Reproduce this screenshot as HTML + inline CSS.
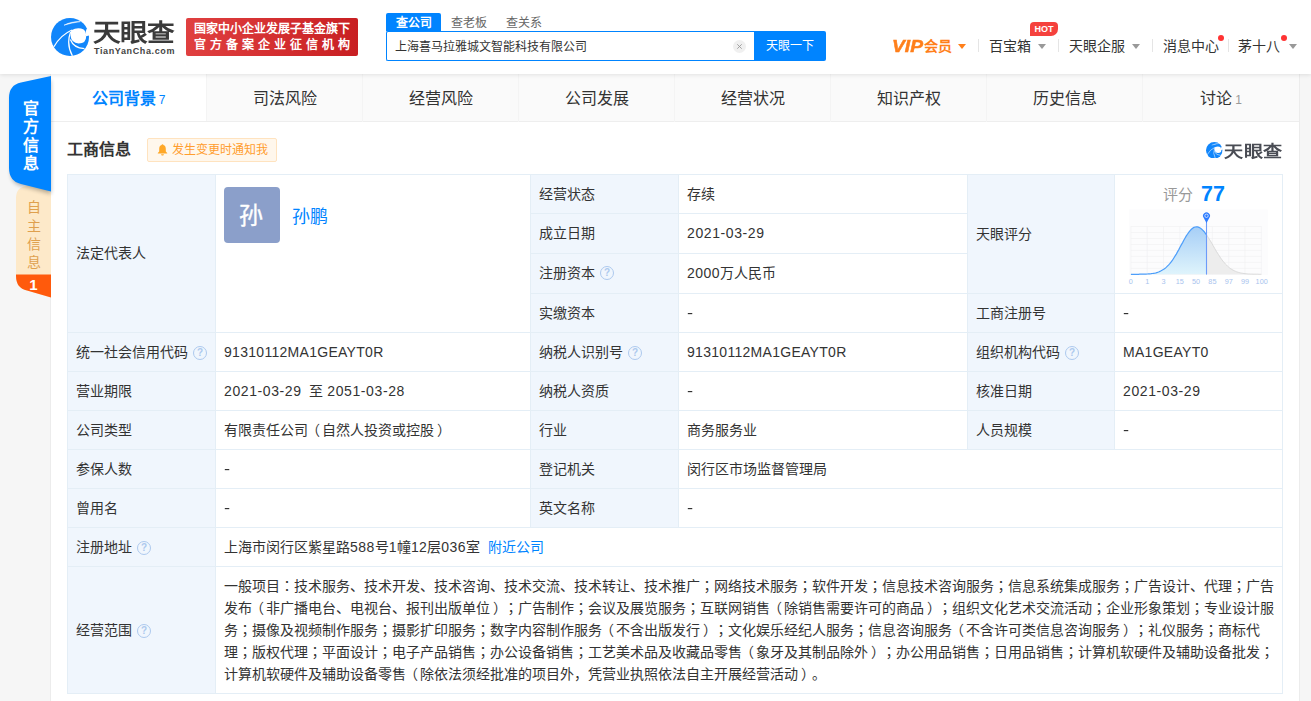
<!DOCTYPE html>
<html lang="zh-CN">
<head>
<meta charset="utf-8">
<title>天眼查</title>
<style>
*{box-sizing:border-box;margin:0;padding:0}
html,body{width:1311px;height:701px;overflow:hidden;background:#f6f6f6}
body{text-spacing-trim:space-all;font-family:"Liberation Sans",sans-serif;font-size:14px;color:#333;position:relative}
.abs{position:absolute}
/* header */
#hdr{position:absolute;left:0;top:0;width:1311px;height:74px;background:#fff;box-shadow:0 1px 4px rgba(0,0,0,.10);z-index:5}
#logo-ico{position:absolute;left:51px;top:18px;width:38px;height:38px}
#logo-txt{position:absolute;left:93px;top:16.5px;font-size:23.5px;font-weight:bold;color:#3a3a3a;line-height:32px;white-space:nowrap;transform:scaleX(1.175);transform-origin:0 0}
#logo-sub{position:absolute;left:94px;top:45px;font-size:9px;font-weight:bold;color:#444;line-height:12px;letter-spacing:.62px;white-space:nowrap}
#banner{position:absolute;left:186px;top:18px;width:172px;height:38px;border-radius:2px;background:linear-gradient(90deg,#e04040,#c81f22);color:#fff;font-weight:bold;font-size:12px;line-height:15px;padding:4px 0 0 8px;white-space:nowrap}
#banner .l2{letter-spacing:4px;display:block;margin-top:1px}
#stabs{position:absolute;left:386px;top:13px;height:18px;font-size:12px;line-height:21px;color:#666;white-space:nowrap}
#stabs span{display:inline-block;height:18px;padding:0 9.5px;vertical-align:top}
#stabs .on{background:#0084ff;color:#fff;font-weight:bold;border-radius:2px 2px 0 0}
#sbox{position:absolute;left:386px;top:31px;width:369px;height:30px;border:1px solid #0084ff;border-right:0;border-radius:2px 0 0 2px;font-size:12px;line-height:29px;padding-left:8px;padding-top:1px;color:#333;white-space:nowrap}
#sclr{position:absolute;left:732.5px;top:39.5px;width:13px;height:13px;border-radius:50%;background:#f0f0f0}
#sbtn{position:absolute;left:754px;top:31px;width:72px;height:30px;background:#0084ff;color:#fff;font-size:12px;line-height:30px;text-align:center;border-radius:0 2px 2px 0}
.rn{position:absolute;top:36px;font-size:14px;line-height:20px;color:#333;white-space:nowrap}
.caret{position:absolute;width:0;height:0;border-left:4.5px solid transparent;border-right:4.5px solid transparent;border-top:5px solid #999}
.vsep{position:absolute;top:39px;width:1px;height:13px;background:#e5e5e5}
.dot{position:absolute;width:6px;height:6px;border-radius:50%;background:#f33}
/* side tabs */
/* main */
#main{position:absolute;left:51px;top:74px;width:1248px;height:627px;background:#fff;box-shadow:-1px 0 0 #ececec,1px 0 0 #ececec}
#nav{position:absolute;left:0;top:0;width:1248px;height:48px;background:#fafafa;border-bottom:1px solid #eee}
#nav div{position:absolute;top:0;height:48px;line-height:50px;font-size:16px;color:#333;text-align:center;width:156px;border-right:1px solid #f4f4f4}
#nav div.on{background:#fff;color:#0084ff;font-weight:bold;height:47px}
#nav small{font-size:12px;font-weight:normal;margin-left:3px}
#h2{position:absolute;left:16px;top:64px;font-size:16px;font-weight:bold;color:#333;line-height:24px}
#notify{position:absolute;left:96px;top:64px;width:130px;height:24px;border:1px solid #ffe3bf;background:#fff7ec;border-radius:2px;color:#ff9d2e;font-size:12px;line-height:23px;padding-left:24px;white-space:nowrap}
table{position:absolute;left:16px;top:100px;border-collapse:collapse;table-layout:fixed;width:1216px}
td{border:1px solid #e4eef6;font-size:14px;line-height:22px;padding:0 8px;height:39px;color:#333;vertical-align:middle;white-space:nowrap}
td.k{background:#f0f6fd}
.q{display:inline-block;width:14px;height:14px;border:1px solid #adc9ee;border-radius:50%;color:#adc9ee;font-size:10px;font-style:normal;font-weight:bold;line-height:12px;text-align:center;vertical-align:1.5px;margin-left:5px}
b.pc,b.pl,b.pr{font-weight:normal}
b.pl{position:relative;left:-2.5px}
b.pr{position:relative;left:2.5px}
.hy{display:inline-block;font-style:normal;transform:scaleX(1.3);transform-origin:0 50%}
.n{letter-spacing:.29px}
.g{letter-spacing:.43px}
.d{letter-spacing:.6px}
tr.up td{padding-bottom:2px}
a{color:#0084ff;text-decoration:none}
#hot{position:absolute;left:1030px;top:22px;width:28px;height:14px;background:#f5413d;color:#fff;font-size:9px;font-weight:bold;line-height:14px;text-align:center;border-radius:4px 4px 7px 0}
#wm{left:1173px;top:66px;font-size:15.5px;line-height:24px;font-weight:bold;color:#494c54;white-space:nowrap;transform:scaleX(1.23);transform-origin:0 0}
#score{padding:0 8px}
#av{display:inline-block;width:56px;height:56px;border-radius:4px;background:#8b9fca;color:#fff;font-size:24px;font-weight:normal;-webkit-text-stroke:.35px #fff;line-height:58px;text-align:center;vertical-align:top;padding-right:1.5px}
#nm{display:inline-block;font-size:18px;line-height:24px;margin-left:11.5px;margin-top:17.6px;vertical-align:top;letter-spacing:.4px}

</style>
</head>
<body>
<svg width="0" height="0" style="position:absolute"><defs>
<symbol id="tyc" viewBox="0 0 38 38">
  <circle cx="19" cy="19" r="19" fill="#1186fb"/>
  <path d="M20.3 12.3 Q27 8.6 32.6 11.6 Q35 13.4 34 16.2 L35.2 18 Q35.4 25.4 27.6 25.4 Q20.3 25 19.6 18 Q19.5 14.5 20.3 12.3 Z" fill="#fff"/>
  <path d="M35.6 11 L33.9 16.3 L34.9 18.3 L38.5 17.5 L39 10.5 Z" fill="#fff"/>
  <path d="M2.9 28.8 Q9.5 17 21 12" stroke="#fff" stroke-width="1.25" fill="none"/>
  <path d="M19.6 14 Q15 26 21.4 37.8" stroke="#fff" stroke-width="1.25" fill="none"/>
  <path d="M19.4 21.5 Q22.5 30 33.4 30.6" stroke="#fff" stroke-width="1.25" fill="none"/>
  <path d="M13 7.2 Q20 3.4 29.3 3.6 Q21 4.8 13 7.2 Z" stroke="#fff" stroke-width=".5" fill="#fff"/>
</symbol></defs></svg>
<div id="hdr">
  <svg id="logo-ico"><use href="#tyc"/></svg>
  <div id="logo-txt">天眼查</div>
  <div id="logo-sub">TianYanCha.com</div>
  <div id="banner">国家中小企业发展子基金旗下<span class="l2">官方备案企业征信机构</span></div>
  <div id="stabs"><span class="on">查公司</span><span>查老板</span><span>查关系</span></div>
  <div id="sbox">上海喜马拉雅城文智能科技有限公司</div>
  <svg id="sclr" viewBox="0 0 13 13"><path d="M4.3 4.3 L8.7 8.7 M8.7 4.3 L4.3 8.7" stroke="#999" stroke-width=".9" fill="none"/></svg>
  <div id="sbtn">天眼一下</div>
  <div class="rn" style="left:892px;top:35px;color:#ff7f1a;font-weight:bold;font-size:14px;line-height:22px"><span style="display:inline-block;font-style:italic;font-size:17px;-webkit-text-stroke:.5px #ff7f1a;transform:scaleX(1.13);transform-origin:0 50%;margin-right:4.2px;vertical-align:-1px">VIP</span>会员</div>
  <div class="caret" style="left:958px;top:43.5px;border-top-color:#ff7f1a"></div>
  <div class="vsep" style="left:978px"></div>
  <div class="rn" style="left:989px">百宝箱</div>
  <div class="caret" style="left:1038px;top:43.5px"></div>
  <div id="hot">HOT</div>
  <div class="vsep" style="left:1058px"></div>
  <div class="rn" style="left:1069px">天眼企服</div>
  <div class="caret" style="left:1132px;top:43.5px"></div>
  <div class="vsep" style="left:1152px"></div>
  <div class="rn" style="left:1163px">消息中心</div>
  <div class="dot" style="left:1218px;top:35px"></div>
  <div class="vsep" style="left:1228px"></div>
  <div class="rn" style="left:1238px">茅十八</div>
  <div class="dot" style="left:1281px;top:35px"></div>
  <div class="caret" style="left:1288.5px;top:43.5px"></div>
</div>
<svg id="side" class="abs" style="left:0;top:70px;z-index:6" width="60" height="240" viewBox="0 70 60 240">
  <defs><filter id="sh" x="-30%" y="-10%" width="160%" height="130%"><feGaussianBlur stdDeviation="2.2"/></filter></defs>
  <path d="M51 186 L27 186 Q16 187 16 198 L16 276 Q16 288 27 290.5 L51 297.5 Z" fill="#fde9c9"/>
  <path d="M16 274.5 L51 274.5 L51 297.5 L27 290.5 Q16 288 16 276 Z" fill="#ff5a0c"/>
  <path d="M51 80 L22 86 Q11 88 11 100 L11 172 Q11 184 22 186 L51 194 Z" fill="#000" opacity=".28" filter="url(#sh)"/>
  <path d="M51 76 L21 82.5 Q9 85 9 98 L9 168 Q9 181 21 184 L51 191.5 Z" fill="#0084ff"/>
  <g font-family="Liberation Sans, sans-serif" text-anchor="middle">
    <g font-size="16" font-weight="bold" fill="#fff">
      <text x="31" y="113.5">官</text><text x="31" y="132.2">方</text><text x="31" y="151">信</text><text x="31" y="169.2">息</text>
    </g>
    <g font-size="14" fill="#dfa04e">
      <text x="33.5" y="212">自</text><text x="33.5" y="230.5">主</text><text x="33.5" y="249">信</text><text x="33.5" y="266.5">息</text>
    </g>
    <text x="33.5" y="290" font-size="15" font-weight="bold" fill="#fff">1</text>
  </g>
</svg>
<div id="main">
  <div id="nav">
    <div class="on" style="left:0">公司背景<small>7</small></div>
    <div style="left:156px">司法风险</div>
    <div style="left:312px">经营风险</div>
    <div style="left:468px">公司发展</div>
    <div style="left:624px">经营状况</div>
    <div style="left:780px">知识产权</div>
    <div style="left:936px">历史信息</div>
    <div style="left:1092px;width:156px;border-right:0">讨论<small style="color:#999">1</small></div>
  </div>
  <div id="h2">工商信息</div>
  <div id="notify"><svg class="abs" style="left:8.5px;top:5px" width="11" height="12" viewBox="0 0 11 12"><path d="M5.5 0.2 C6.1 0.2 6.4 .6 6.4 1.1 C8 1.6 8.8 3 8.8 4.8 L8.8 7.4 L10.2 8.9 L10.2 9.5 L0.8 9.5 L0.8 8.9 L2.2 7.4 L2.2 4.8 C2.2 3 3 1.6 4.6 1.1 C4.6 .6 4.9 .2 5.5 .2 Z M4.1 10.2 L6.9 10.2 C6.9 11 6.3 11.6 5.5 11.6 C4.7 11.6 4.1 11 4.1 10.2 Z" fill="#ffa726"/></svg>发生变更时通知我</div>
  <svg class="abs" style="left:1155.4px;top:67.5px;width:16.6px;height:16.6px"><use href="#tyc"/></svg>
  <div class="abs" id="wm">天眼查</div>
  <table>
    <colgroup><col style="width:148px"><col style="width:315px"><col style="width:148px"><col style="width:289px"><col style="width:147px"><col style="width:168px"></colgroup>
    <tr style="height:39px"><td class="k" rowspan="4" style="padding-bottom:2px">法定代表人</td><td rowspan="4" style="vertical-align:top;padding-top:12px"><span id="av">孙</span><a id="nm">孙鹏</a></td><td class="k">经营状态</td><td>存续</td><td class="k" rowspan="3">天眼评分</td><td rowspan="3" id="score"><div style="position:relative;top:-1px;width:167px;height:117px;margin:0 -8px"><svg class="abs" style="left:0;top:0" width="167" height="117" viewBox="0 0 167 117">
  <defs><linearGradient id="bg1" x1="0" y1="0" x2="0" y2="1"><stop offset="0" stop-color="#a6cef6"/><stop offset="1" stop-color="#dff4fc"/></linearGradient></defs>
  <rect x="14" y="34.5" width="138.8" height="65.5" fill="#fcfcfd"/>
  <g stroke="#f0f0f1" stroke-width=".6"><line x1="15.9" y1="51.5" x2="15.9" y2="99.4"/><line x1="32.2" y1="51.5" x2="32.2" y2="99.4"/><line x1="48.5" y1="51.5" x2="48.5" y2="99.4"/><line x1="64.8" y1="51.5" x2="64.8" y2="99.4"/><line x1="81.1" y1="51.5" x2="81.1" y2="99.4"/><line x1="97.4" y1="51.5" x2="97.4" y2="99.4"/><line x1="113.7" y1="51.5" x2="113.7" y2="99.4"/><line x1="130.0" y1="51.5" x2="130.0" y2="99.4"/><line x1="146.3" y1="51.5" x2="146.3" y2="99.4"/><line x1="15.9" y1="51.5" x2="146.3" y2="51.5"/><line x1="15.9" y1="57.5" x2="146.3" y2="57.5"/><line x1="15.9" y1="63.5" x2="146.3" y2="63.5"/><line x1="15.9" y1="69.5" x2="146.3" y2="69.5"/><line x1="15.9" y1="75.4" x2="146.3" y2="75.4"/><line x1="15.9" y1="81.4" x2="146.3" y2="81.4"/><line x1="15.9" y1="87.4" x2="146.3" y2="87.4"/><line x1="15.9" y1="93.4" x2="146.3" y2="93.4"/><line x1="15.9" y1="99.4" x2="146.3" y2="99.4"/></g>
  <polygon points="91.5,59.8 92.4,61.2 93.3,62.6 94.2,64.1 95.2,65.6 96.1,67.1 97.0,68.7 97.9,70.3 98.8,71.9 99.7,73.5 100.6,75.0 101.5,76.6 102.5,78.1 103.4,79.5 104.3,80.9 105.2,82.3 106.1,83.6 107.0,84.9 107.9,86.1 108.9,87.2 109.8,88.3 110.7,89.3 111.6,90.2 112.5,91.1 113.4,91.9 114.3,92.7 115.2,93.4 116.2,94.0 117.1,94.6 118.0,95.1 118.9,95.6 119.8,96.0 120.7,96.4 121.6,96.8 122.6,97.1 123.5,97.4 124.4,97.6 125.3,97.9 126.2,98.1 127.1,98.2 128.0,98.4 128.9,98.5 129.9,98.6 130.8,98.7 131.7,98.8 132.6,98.9 133.5,99.0 134.4,99.0 135.3,99.1 136.3,99.1 137.2,99.1 138.1,99.2 139.0,99.2 139.9,99.2 140.8,99.2 141.7,99.2 142.6,99.2 143.6,99.3 144.5,99.3 145.4,99.3 146.3,99.3 146.3,99.3 91.5,99.3" fill="#ededed"/>
  <polyline points="91.5,59.8 92.4,61.2 93.3,62.6 94.2,64.1 95.2,65.6 96.1,67.1 97.0,68.7 97.9,70.3 98.8,71.9 99.7,73.5 100.6,75.0 101.5,76.6 102.5,78.1 103.4,79.5 104.3,80.9 105.2,82.3 106.1,83.6 107.0,84.9 107.9,86.1 108.9,87.2 109.8,88.3 110.7,89.3 111.6,90.2 112.5,91.1 113.4,91.9 114.3,92.7 115.2,93.4 116.2,94.0 117.1,94.6 118.0,95.1 118.9,95.6 119.8,96.0 120.7,96.4 121.6,96.8 122.6,97.1 123.5,97.4 124.4,97.6 125.3,97.9 126.2,98.1 127.1,98.2 128.0,98.4 128.9,98.5 129.9,98.6 130.8,98.7 131.7,98.8 132.6,98.9 133.5,99.0 134.4,99.0 135.3,99.1 136.3,99.1 137.2,99.1 138.1,99.2 139.0,99.2 139.9,99.2 140.8,99.2 141.7,99.2 142.6,99.2 143.6,99.3 144.5,99.3 145.4,99.3 146.3,99.3" fill="none" stroke="#dadada" stroke-width="1"/>
  <polygon points="15.9,99.3 17.2,99.3 18.4,99.3 19.7,99.3 20.9,99.3 22.2,99.3 23.5,99.3 24.7,99.2 26.0,99.2 27.2,99.2 28.5,99.2 29.8,99.1 31.0,99.1 32.3,99.0 33.5,98.9 34.8,98.8 36.1,98.7 37.3,98.5 38.6,98.3 39.8,98.1 41.1,97.8 42.4,97.4 43.6,97.0 44.9,96.4 46.1,95.8 47.4,95.1 48.7,94.3 49.9,93.4 51.2,92.4 52.4,91.2 53.7,89.9 55.0,88.4 56.2,86.8 57.5,85.1 58.7,83.2 60.0,81.2 61.3,79.1 62.5,76.9 63.8,74.6 65.0,72.3 66.3,69.9 67.6,67.6 68.8,65.3 70.1,63.0 71.3,60.9 72.6,59.0 73.9,57.2 75.1,55.6 76.4,54.3 77.6,53.2 78.9,52.4 80.2,52.0 81.4,51.8 82.7,51.9 83.9,52.4 85.2,53.0 86.5,54.0 87.7,55.1 89.0,56.5 90.2,58.1 91.5,59.8 91.5,99.3 15.9,99.3" fill="url(#bg1)"/>
  <polyline points="15.9,99.3 17.2,99.3 18.4,99.3 19.7,99.3 20.9,99.3 22.2,99.3 23.5,99.3 24.7,99.2 26.0,99.2 27.2,99.2 28.5,99.2 29.8,99.1 31.0,99.1 32.3,99.0 33.5,98.9 34.8,98.8 36.1,98.7 37.3,98.5 38.6,98.3 39.8,98.1 41.1,97.8 42.4,97.4 43.6,97.0 44.9,96.4 46.1,95.8 47.4,95.1 48.7,94.3 49.9,93.4 51.2,92.4 52.4,91.2 53.7,89.9 55.0,88.4 56.2,86.8 57.5,85.1 58.7,83.2 60.0,81.2 61.3,79.1 62.5,76.9 63.8,74.6 65.0,72.3 66.3,69.9 67.6,67.6 68.8,65.3 70.1,63.0 71.3,60.9 72.6,59.0 73.9,57.2 75.1,55.6 76.4,54.3 77.6,53.2 78.9,52.4 80.2,52.0 81.4,51.8 82.7,51.9 83.9,52.4 85.2,53.0 86.5,54.0 87.7,55.1 89.0,56.5 90.2,58.1 91.5,59.8" fill="none" stroke="#4d9efa" stroke-width="1.2"/>
  <line x1="91.5" y1="43.1" x2="91.5" y2="99.6" stroke="#6c9bfa" stroke-width="1.1"/>
  <path d="M91.5 48.1 L88.5 42.6 A3.5 3.5 0 1 1 94.5 42.6 Z" fill="#2f7dff"/>
  <circle cx="91.5" cy="40.8" r="1.7" fill="none" stroke="#fff" stroke-width=".8" opacity=".85"/>
  <g font-family="Liberation Sans, sans-serif" font-size="7.3" fill="#a9c4ee" text-anchor="middle"><text x="15.9" y="108.9">0</text><text x="32.2" y="108.9">1</text><text x="48.5" y="108.9">3</text><text x="64.8" y="108.9">15</text><text x="81.1" y="108.9">50</text><text x="97.4" y="108.9">85</text><text x="113.7" y="108.9">97</text><text x="130.0" y="108.9">99</text><text x="146.7" y="108.9">100</text></g>
</svg><span class="abs" style="left:48px;top:10px;font-size:15px;line-height:20px;color:#999">评分</span><span class="abs" style="left:86px;top:7px;font-size:21.5px;line-height:24px;font-weight:bold;color:#0084ff">77</span></div></td></tr>
    <tr style="height:40px" class="up"><td class="k">成立日期</td><td><span class="d">2021-03-29</span></td></tr>
    <tr style="height:40px" class="up"><td class="k">注册资本<i class="q">?</i></td><td><span class="g">2000</span>万人民币</td></tr>
    <tr style="height:39px"><td class="k">实缴资本</td><td><i class="hy">-</i></td><td class="k">工商注册号</td><td><i class="hy">-</i></td></tr>
    <tr><td class="k">统一社会信用代码<i class="q">?</i></td><td><span class="n">91310112MA1GEAYT0R</span></td><td class="k">纳税人识别号<i class="q">?</i></td><td><span class="n">91310112MA1GEAYT0R</span></td><td class="k">组织机构代码<i class="q">?</i></td><td><span class="n">MA1GEAYT0</span></td></tr>
    <tr><td class="k">营业期限</td><td><span class="d">2021-03-29</span>&nbsp; 至 <span class="d">2051-03-28</span></td><td class="k">纳税人资质</td><td><i class="hy">-</i></td><td class="k">核准日期</td><td><span class="d">2021-03-29</span></td></tr>
    <tr><td class="k">公司类型</td><td>有限责任公司<b class="pl">（</b>自然人投资或控股<b class="pr">）</b></td><td class="k">行业</td><td>商务服务业</td><td class="k">人员规模</td><td><i class="hy">-</i></td></tr>
    <tr><td class="k">参保人数</td><td><i class="hy">-</i></td><td class="k">登记机关</td><td colspan="3">闵行区市场监督管理局</td></tr>
    <tr><td class="k">曾用名</td><td><i class="hy">-</i></td><td class="k">英文名称</td><td colspan="3"><i class="hy">-</i></td></tr>
    <tr><td class="k">注册地址<i class="q">?</i></td><td colspan="5">上海市闵行区紫星路<span class="g">588</span>号<span class="g">1</span>幢<span class="g">12</span>层<span class="g">036</span>室<a style="margin-left:8px">附近公司</a></td></tr>
    <tr style="height:127px"><td class="k">经营范围<i class="q">?</i></td><td colspan="5" style="white-space:nowrap;padding-top:0;padding-bottom:0">一般项目<b class="pc" lang="zh-TW">：</b>技术服务、技术开发、技术咨询、技术交流、技术转让、技术推广<b class="pc" lang="zh-TW">；</b>网络技术服务<b class="pc" lang="zh-TW">；</b>软件开发<b class="pc" lang="zh-TW">；</b>信息技术咨询服务<b class="pc" lang="zh-TW">；</b>信息系统集成服务<b class="pc" lang="zh-TW">；</b>广告设计、代理<b class="pc" lang="zh-TW">；</b>广告<br>发布<b class="pl">（</b>非广播电台、电视台、报刊出版单位<b class="pr">）</b><b class="pc" lang="zh-TW">；</b>广告制作<b class="pc" lang="zh-TW">；</b>会议及展览服务<b class="pc" lang="zh-TW">；</b>互联网销售<b class="pl">（</b>除销售需要许可的商品<b class="pr">）</b><b class="pc" lang="zh-TW">；</b>组织文化艺术交流活动<b class="pc" lang="zh-TW">；</b>企业形象策划<b class="pc" lang="zh-TW">；</b>专业设计服<br>务<b class="pc" lang="zh-TW">；</b>摄像及视频制作服务<b class="pc" lang="zh-TW">；</b>摄影扩印服务<b class="pc" lang="zh-TW">；</b>数字内容制作服务<b class="pl">（</b>不含出版发行<b class="pr">）</b><b class="pc" lang="zh-TW">；</b>文化娱乐经纪人服务<b class="pc" lang="zh-TW">；</b>信息咨询服务<b class="pl">（</b>不含许可类信息咨询服务<b class="pr">）</b><b class="pc" lang="zh-TW">；</b>礼仪服务<b class="pc" lang="zh-TW">；</b>商标代<br>理<b class="pc" lang="zh-TW">；</b>版权代理<b class="pc" lang="zh-TW">；</b>平面设计<b class="pc" lang="zh-TW">；</b>电子产品销售<b class="pc" lang="zh-TW">；</b>办公设备销售<b class="pc" lang="zh-TW">；</b>工艺美术品及收藏品零售<b class="pl">（</b>象牙及其制品除外<b class="pr">）</b><b class="pc" lang="zh-TW">；</b>办公用品销售<b class="pc" lang="zh-TW">；</b>日用品销售<b class="pc" lang="zh-TW">；</b>计算机软硬件及辅助设备批发<b class="pc" lang="zh-TW">；</b><br>计算机软硬件及辅助设备零售<b class="pl">（</b>除依法须经批准的项目外，凭营业执照依法自主开展经营活动<b class="pr">）</b>。</td></tr>
  </table>
</div>
</body>
</html>
